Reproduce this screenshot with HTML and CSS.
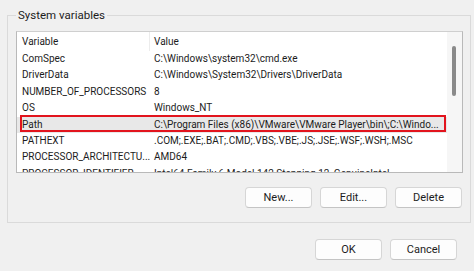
FILE: index.html
```
<!DOCTYPE html>
<html lang="en">
<head>
    <meta charset="UTF-8">
    <meta name="viewport" content="width=device-width, initial-scale=1.0">
    <title>Environment Variables</title>
    <link rel="stylesheet" href="styles.css">
</head>
<body>

    <div class="dialog">
        <fieldset class="group">
            <legend>System variables</legend>

            <div class="list">
                <div class="list-body">
                    <div class="row head">
                        <div class="cell name">Variable</div>
                        <div class="cell value">Value</div>
                    </div>
                    <div class="row">
                        <div class="cell name">ComSpec</div>
                        <div class="cell value">C:\Windows\system32\cmd.exe</div>
                    </div>
                    <div class="row">
                        <div class="cell name">DriverData</div>
                        <div class="cell value">C:\Windows\System32\Drivers\DriverData</div>
                    </div>
                    <div class="row">
                        <div class="cell name">NUMBER_OF_PROCESSORS</div>
                        <div class="cell value">8</div>
                    </div>
                    <div class="row">
                        <div class="cell name">OS</div>
                        <div class="cell value">Windows_NT</div>
                    </div>
                    <div class="row selected">
                        <div class="cell name">Path</div>
                        <div class="cell value">C:\Program Files (x86)\VMware\VMware Player\bin\;C:\Windo...</div>
                    </div>
                    <div class="row">
                        <div class="cell name">PATHEXT</div>
                        <div class="cell value">.COM;.EXE;.BAT;.CMD;.VBS;.VBE;.JS;.JSE;.WSF;.WSH;.MSC</div>
                    </div>
                    <div class="row">
                        <div class="cell name">PROCESSOR_ARCHITECTU...</div>
                        <div class="cell value">AMD64</div>
                    </div>
                    <div class="row">
                        <div class="cell name">PROCESSOR_IDENTIFIER</div>
                        <div class="cell value">Intel64 Family 6 Model 142 Stepping 12, GenuineIntel</div>
                    </div>
                </div>
                <div class="scrollbar">
                    <div class="thumb"></div>
                </div>
            </div>

            <div class="actions">
                <button type="button">New...</button>
                <button type="button">Edit...</button>
                <button type="button">Delete</button>
            </div>
        </fieldset>

        <div class="footer">
            <button type="button">OK</button>
            <button type="button">Cancel</button>
        </div>
    </div>

</body>
</html>
```

FILE: styles.css
```
body {
    margin: 0;
    width: 474px;
    height: 271px;
    overflow: hidden;
    background-color: #f0f0f0;
    font-family: 'Roboto', sans-serif;
    font-size: 10px;
    color: #1c1c1c;
}

.dialog {
    display: flex;
    flex-direction: column;
}

/* Group box */
.group {
    margin: 7px 3px 0 7px;
    padding: 8px 7px 14px 8px;
    border: 1px solid #dadada;
    min-width: 0;
}

.group legend {
    padding: 0 2px;
    line-height: 16px;
    font-size: 11.5px;
}

/* List view */
.list {
    display: flex;
    height: 140px;
    border: 1px solid #b9b9b9;
    border-top-color: #cfcfcf;
    background-color: white;
}

.list-body {
    flex: 1;
    overflow: hidden;
}

.row {
    display: grid;
    grid-template-columns: 133px 1fr;
    height: 16.4px;
    line-height: 16.4px;
    white-space: nowrap;
}

.row.head {
    height: 19px;
    line-height: 19px;
}

.row.head .name {
    border-right: 1px solid #ececec;
}

.cell {
    overflow: hidden;
}

.name {
    padding-left: 5px;
}

.value {
    padding-left: 4px;
}

.row.selected {
    position: relative;
    background-color: #e8e8e8;
}

/* Red annotation box */
.row.selected::after {
    content: '';
    position: absolute;
    left: 3px;
    right: 1px;
    top: -2px;
    height: 13px;
    border: 2px solid #e2141d;
}

.scrollbar {
    width: 15px;
    background-color: #f6f6f6;
    position: relative;
}

.thumb {
    position: absolute;
    left: 5px;
    top: 14px;
    width: 4px;
    height: 50px;
    border-radius: 2px;
    background-color: #8a8a8a;
}

/* Buttons */
.actions,
.footer {
    display: flex;
    justify-content: flex-end;
    gap: 8px;
}

.actions {
    margin-top: 14px;
    margin-right: 1px;
}

.footer {
    margin-top: 16px;
    margin-right: 17px;
}

button {
    width: 67px;
    height: 21px;
    padding: 0;
    background-color: #fdfdfd;
    border: 1px solid #d6d6d6;
    border-bottom-color: #c4c4c4;
    border-radius: 4px;
    font-family: 'Roboto', sans-serif;
    font-size: 11px;
    color: #1c1c1c;
}
```
